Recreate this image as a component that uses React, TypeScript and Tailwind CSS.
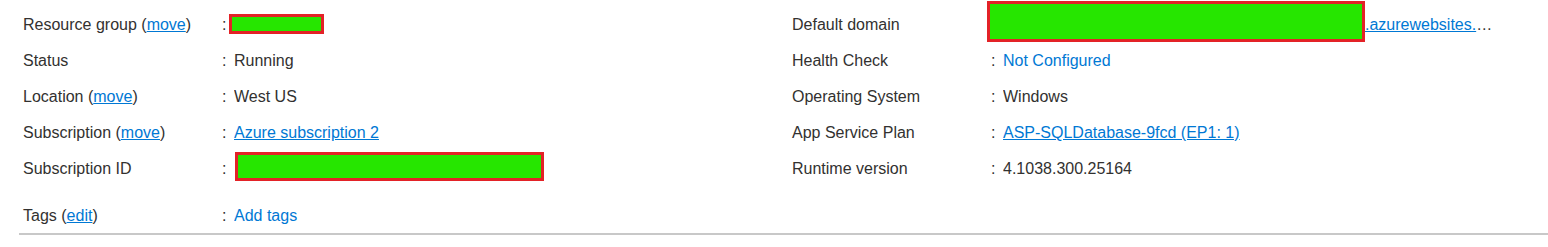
import type { ReactNode } from "react";

type Row = {
  label: ReactNode;
  value: ReactNode;
  overlay?: string;
};

function Move({ text = "move" }: { text?: string }) {
  return (
    <>
      (<a className="text-[#0078d4] underline">{text}</a>)
    </>
  );
}

function Redact({ className }: { className: string }) {
  return (
    <div
      className={
        "absolute border-[3px] border-[#e32227] bg-[#26e600] " + className
      }
    />
  );
}

const leftRows: Row[] = [
  {
    label: (
      <>
        Resource group <Move />
      </>
    ),
    value: <a className="text-[#0078d4] underline">&nbsp;</a>,
    overlay: "left-[-5px] top-[1px] h-[20px] w-[95px]",
  },
  { label: "Status", value: "Running" },
  {
    label: (
      <>
        Location <Move />
      </>
    ),
    value: "West US",
  },
  {
    label: (
      <>
        Subscription <Move />
      </>
    ),
    value: (
      <a className="text-[#0078d4] underline">Azure subscription 2</a>
    ),
  },
  {
    label: "Subscription ID",
    value: <>&nbsp;</>,
    overlay: "left-[1px] top-[-5px] h-[29px] w-[309px]",
  },
];

const rightRows: Row[] = [
  {
    label: "Default domain",
    value: (
      <>
        <span className="inline-block w-[362px]" />
        <a className="text-[#0078d4] underline">.azurewebsites.net</a>
      </>
    ),
    overlay: "left-[-16px] top-[-12px] h-[41px] w-[378px]",
  },
  {
    label: "Health Check",
    value: <span className="text-[#0078d4]">Not Configured</span>,
  },
  { label: "Operating System", value: "Windows" },
  {
    label: "App Service Plan",
    value: (
      <a className="text-[#0078d4] underline">ASP-SQLDatabase-9fcd (EP1: 1)</a>
    ),
  },
  { label: "Runtime version", value: "4.1038.300.25164" },
];

function PropRow({ row, valueWidth }: { row: Row; valueWidth: string }) {
  return (
    <div className="flex h-[36px] items-center">
      <div className="w-[199px] shrink-0 whitespace-nowrap">{row.label}</div>
      <div className="w-[12px] shrink-0">:</div>
      <div className={"relative " + valueWidth}>
        <div className="overflow-hidden text-ellipsis whitespace-nowrap">
          {row.value}
        </div>
        {row.overlay && <Redact className={row.overlay} />}
      </div>
    </div>
  );
}

export default function App() {
  return (
    <div className="h-[247px] w-full bg-white font-['Liberation_Sans',Arial,sans-serif] text-[16px] text-[#323130]">
      <div className="pl-[23px] pt-[7px]">
        <div className="flex">
          <div className="w-[769px] shrink-0">
            {leftRows.map((r, i) => (
              <PropRow key={i} row={r} valueWidth="w-[520px]" />
            ))}
          </div>
          <div className="flex-1">
            {rightRows.map((r, i) => (
              <PropRow key={i} row={r} valueWidth="w-[491px]" />
            ))}
          </div>
        </div>
        <div className="mt-[11px]">
          <PropRow
            row={{
              label: (
                <>
                  Tags <Move text="edit" />
                </>
              ),
              value: <span className="text-[#0078d4]">Add tags</span>,
            }}
            valueWidth="w-[520px]"
          />
        </div>
      </div>
      <div className="ml-[19px] mt-[-1px] h-[2px] bg-[#c8c8c8]" />
    </div>
  );
}
